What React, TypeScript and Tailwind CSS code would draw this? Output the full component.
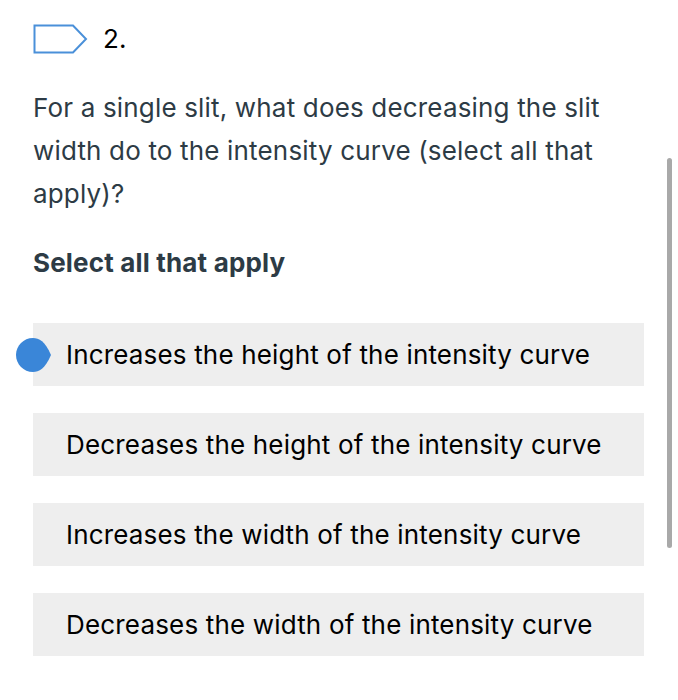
import React from 'react';

const options = [
  'Increases the height of the intensity curve',
  'Decreases the height of the intensity curve',
  'Increases the width of the intensity curve',
  'Decreases the width of the intensity curve',
];

const FlagIcon = () => (
  <svg width="56" height="30" viewBox="0 0 56 30" className="block">
    <path d="M1.5 1.5 H40 L53 15 L40 28.5 H1.5 Z" fill="none" stroke="#4a90d9" strokeWidth="2" />
  </svg>
);

const Marker = () => (
  <svg width="38" height="36" viewBox="0 0 38 36" className="block">
    <path d="M18 1 C24 1 30 4 36 18 C30 32 24 35 18 35 C8.6 35 1 27.4 1 18 C1 8.6 8.6 1 18 1 Z" fill="#3a86d8" />
  </svg>
);

export default function App() {
  const selected = 0;
  return (
    <div className="relative w-[678px] h-[700px] bg-white overflow-hidden tracking-[0.17px]" style={{ fontFamily: 'Inter, "Liberation Sans", sans-serif' }}>
      <div className="absolute right-[6px] top-[158px] w-[5px] h-[390px] rounded-full bg-[#a9a9a9]" />
      <div className="pl-[33px] pr-[34px] pt-[23px]">
        <div className="flex items-center gap-[14px] h-[31px]">
          <FlagIcon />
          <span className="text-[26px] text-black leading-none">2.</span>
        </div>
        <p className="mt-[32px] text-[26px] leading-[43px] text-[#2d3b45]">
          For a single slit, what does decreasing the slit width do to the intensity curve (select all that apply)?
        </p>
        <p className="mt-[26px] text-[26px] font-bold leading-[43px] text-[#2d3b45]">Select all that apply</p>
        <div className="mt-[39px] flex flex-col gap-[27px]">
          {options.map((o, i) => (
            <div key={o} className="relative h-[63px] bg-[#eeeeee] flex items-center pl-[33px]">
              {i === selected && (
                <div className="absolute left-[-18px] top-[14px]">
                  <Marker />
                </div>
              )}
              <span className="text-[26px] text-black">{o}</span>
            </div>
          ))}
        </div>
      </div>
    </div>
  );
}
